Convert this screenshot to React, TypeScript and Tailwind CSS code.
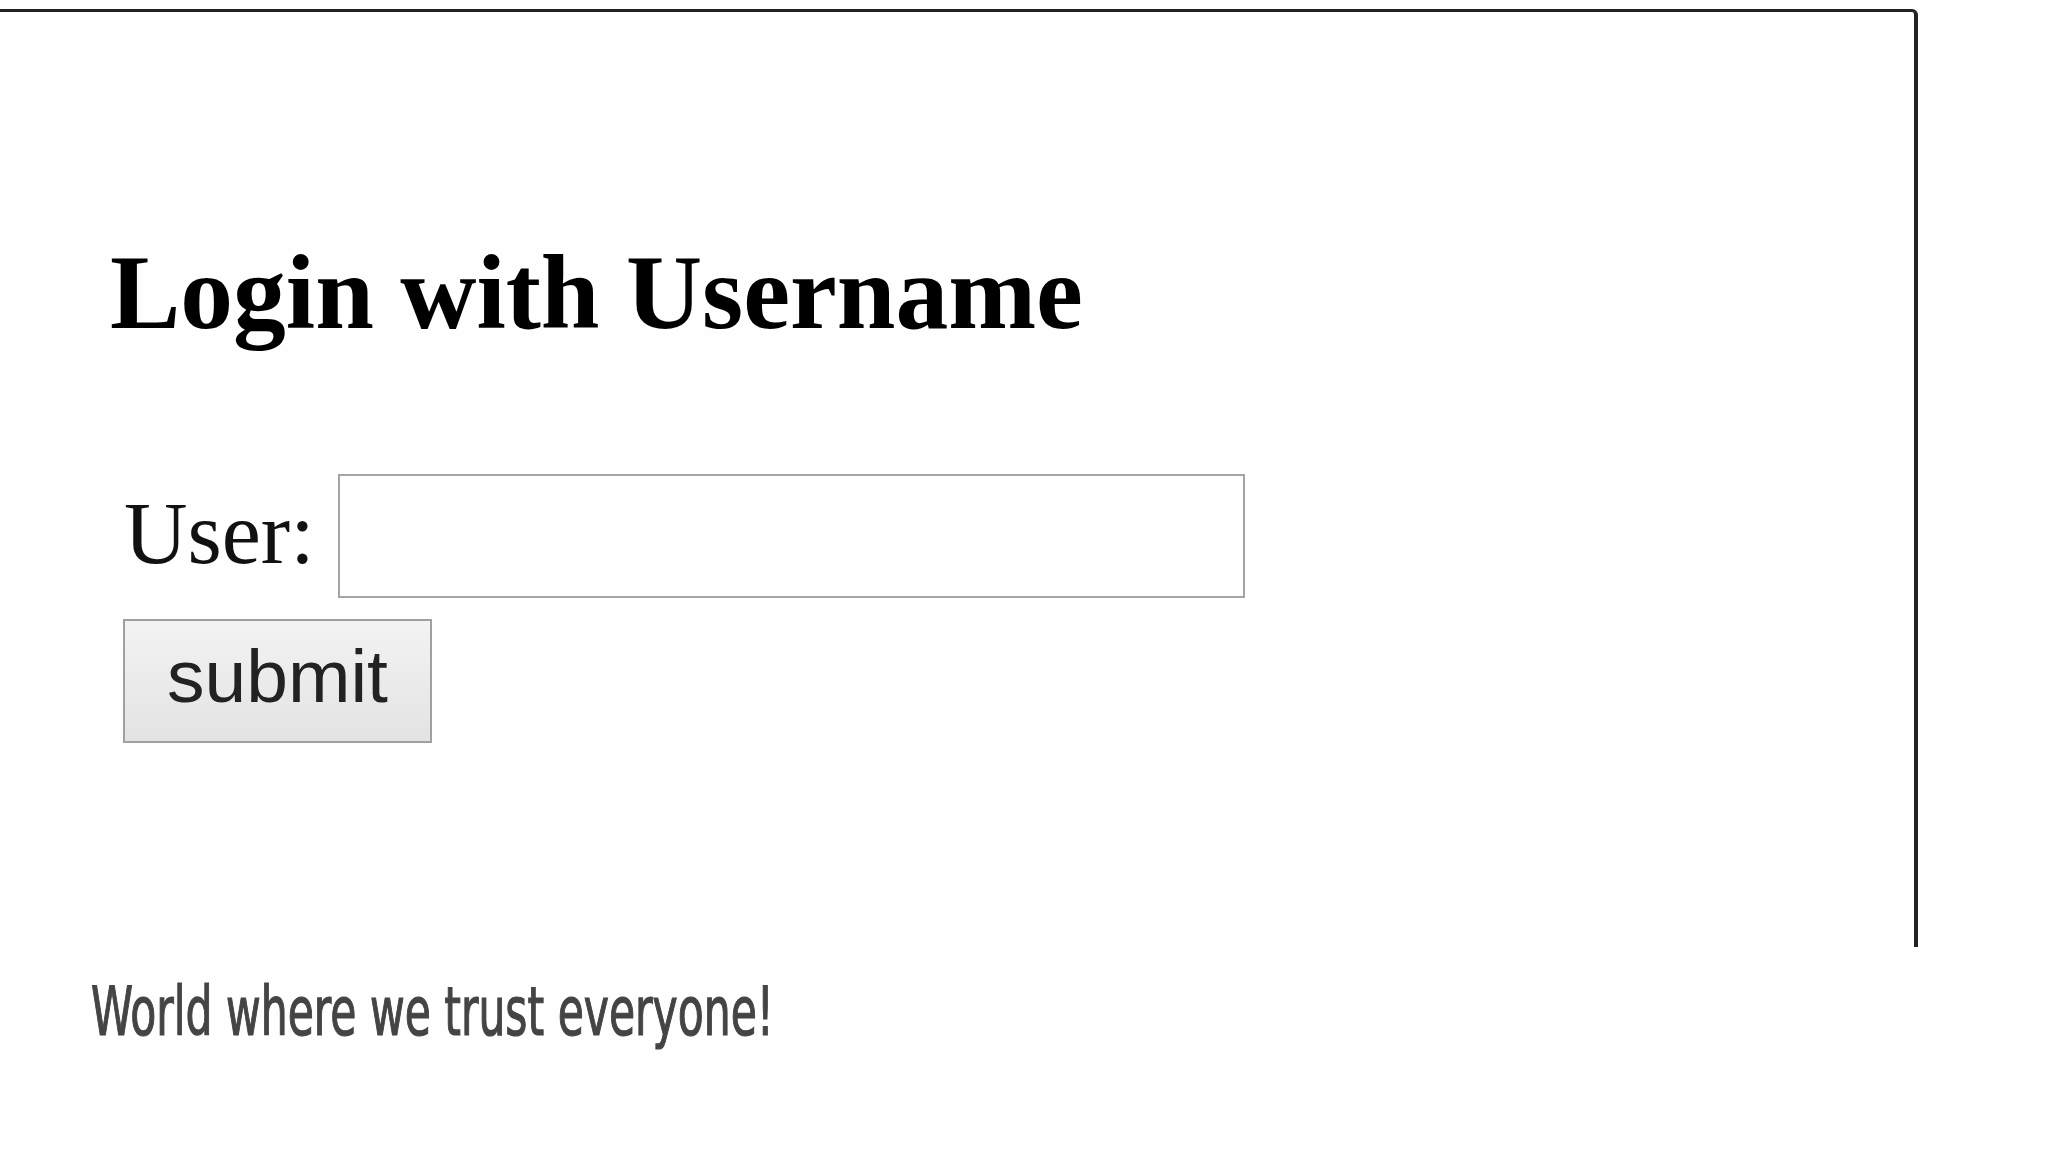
export default function App() {
    return (
        <div className="w-full h-[1152px] bg-[#fefefe] overflow-hidden pt-[9px]">
            {/* Framed form area */}
            <div className="w-[1918px] h-[938px] border-t-[3px] border-r-[4px] border-[#222222] rounded-tr-[6px] pt-[228px]">
                <h1 className="pl-[110px] text-[105.5px] leading-none font-bold text-black font-['Liberation_Serif','Times_New_Roman',serif]">
                    Login with Username
                </h1>

                <div className="flex items-start mt-[128px] pl-[124px]">
                    <label className="mt-[16px] text-[88px] leading-none text-[#111111] font-['Liberation_Serif','Times_New_Roman',serif]">
                        User:
                    </label>
                    <input
                        type="text"
                        className="ml-[23px] w-[907px] h-[124px] border-2 border-[#a4a4a4] bg-white outline-none"
                    />
                </div>

                <div className="pl-[123px] mt-[21px]">
                    <button className="w-[309px] h-[124px] border-2 border-[#a0a0a0] bg-gradient-to-b from-[#f3f3f3] to-[#e3e3e3] pb-[8px] text-[75px] leading-none text-[#222222] font-['Liberation_Sans',Arial,sans-serif]">
                        submit
                    </button>
                </div>
            </div>

            <p className="mt-[32px] ml-[91px] text-[67px] leading-none text-[#444444] whitespace-nowrap origin-left scale-x-[0.705] [-webkit-text-stroke:1.2px_#444444] font-['DejaVu_Sans_Condensed','DejaVu_Sans',sans-serif]">
                World where we trust everyone!
            </p>
        </div>
    );
}
